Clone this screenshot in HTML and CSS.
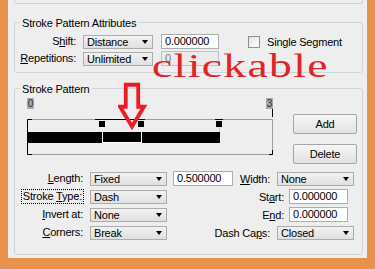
FILE: index.html
```html
<!DOCTYPE html>
<html>
<head>
<meta charset="utf-8">
<link rel="stylesheet" href="styles.css">
</head>
<body>
<div class="panel">
  <div class="prev-box"></div>

  <fieldset class="group g1">
    <legend>Stroke Pattern Attributes</legend>
    <div class="attr-grid">
      <span class="lbl">S<u>h</u>ift:</span>
      <div class="combo w70"><span>Distance</span><i class="caret"></i></div>
      <div class="field w58">0.000000</div>
      <div class="check-wrap"><span class="check"></span><span>Single Se<u>g</u>ment</span></div>

      <span class="lbl"><u>R</u>epetitions:</span>
      <div class="combo w70"><span>Unlimited</span><i class="caret"></i></div>
      <div class="field w58 disabled">0</div>
    </div>
  </fieldset>

  <fieldset class="group g2">
    <legend>Stroke Pattern</legend>
    <div class="pattern-top">
      <div class="pattern">
        <div class="ruler"><span class="tick">0</span><span class="tick">3</span></div>
        <svg class="pat-svg" width="247" height="48" viewBox="0 0 247 48">
          <path d="M5 10.5H245.5V45.5H5" fill="none" stroke="#9e9e9e"/>
          <path d="M5 10.5H0.5V45.5H5" fill="none" stroke="#000"/>
          <path d="M245.5 0V8" fill="none" stroke="#000"/>
          <path d="M242 45.5H245.5V41" fill="none" stroke="#000"/>
          <path d="M68 10.5H118" fill="none" stroke="#000"/>
          <path d="M188 10.5H196" fill="none" stroke="#000"/>
          <rect x="0" y="23" width="75" height="11" fill="#000"/>
          <rect x="76" y="23" width="38" height="10" fill="#000"/>
          <path d="M75.5 18V33.5H114.5V18" fill="none" stroke="#fff"/>
          <rect x="115" y="23" width="78" height="11" fill="#000"/>
          <rect x="72" y="12" width="6" height="6" fill="#000"/>
          <rect x="111" y="12" width="6" height="6" fill="#000"/>
          <rect x="189" y="12" width="6" height="6" fill="#000"/>
          <path d="M192.5 18V23" fill="none" stroke="#c8c8c8"/>
        </svg>
      </div>
      <div class="buttons">
        <button class="btn">Add</button>
        <button class="btn">Delete</button>
      </div>
    </div>

    <div class="form-grid">
      <span class="lbl"><u>L</u>ength:</span>
      <div class="combo w77"><span>Fixed</span><i class="caret"></i></div>
      <div class="right split">
        <div class="field w60">0.500000</div>
        <div class="pair"><span><u>W</u>idth:</span><div class="combo w77"><span>None</span><i class="caret"></i></div></div>
      </div>

      <span class="lbl"><span class="focus">Stroke <u>T</u>ype:</span></span>
      <div class="combo w77"><span>Dash</span><i class="caret"></i></div>
      <div class="right end inset">
        <div class="pair tight"><span>St<u>a</u>rt:</span><div class="field w59">0.000000</div></div>
      </div>

      <span class="lbl"><u>I</u>nvert at:</span>
      <div class="combo w77"><span>None</span><i class="caret"></i></div>
      <div class="right end inset">
        <div class="pair tight"><span>E<u>n</u>d:</span><div class="field w59">0.000000</div></div>
      </div>

      <span class="lbl"><u>C</u>orners:</span>
      <div class="combo w77"><span>Break</span><i class="caret"></i></div>
      <div class="right end">
        <div class="pair"><span>Dash Ca<u>p</u>s:</span><div class="combo w77"><span>Closed</span><i class="caret"></i></div></div>
      </div>
    </div>
  </fieldset>

  <svg class="arrow" width="30" height="50" viewBox="0 0 30 50">
    <path d="M7.75 2.75H20.25V24.75H26L14 44.5L2 24.75H7.75Z" fill="none" stroke="#ec1c24" stroke-width="3.8" stroke-linejoin="miter"/>
  </svg>
  <div class="note">clickable</div>
</div>
</body>
</html>
```

FILE: styles.css
```css
html, body {
  margin: 0;
  padding: 0;
}

body {
  width: 375px;
  height: 269px;
  overflow: hidden;
  background: #e8914b;
  font-family: "Liberation Sans", Arial, sans-serif;
  font-size: 11px;
  letter-spacing: -0.2px;
  color: #000;
}

.panel {
  position: relative;
  margin-left: 8px;
  width: 359px;
  height: 258px;
  background: #eeeeee;
  overflow: hidden;
}

.prev-box {
  margin-left: 6px;
  width: 349px;
  height: 4px;
  box-sizing: border-box;
  border: 1px solid #d0d4d7;
  border-top: 0;
  border-radius: 0 0 3px 3px;
}

.group {
  margin: 0 0 0 6px;
  width: 349px;
  box-sizing: border-box;
  border: 1px solid #d0d4d7;
  border-radius: 3px;
  padding: 0;
  min-inline-size: 0;
}

.group legend {
  margin-left: 5px;
  padding: 2px 2px 0;
  line-height: 13px;
}

.g1 {
  margin-top: 11px;
  padding: 4px 0 6px;
}

.g2 {
  margin-top: 8px;
  padding: 2px 0 14px;
}

u {
  text-decoration: underline;
  text-underline-offset: 1px;
}

.lbl {
  text-align: right;
  padding-right: 7px;
  line-height: 15px;
  white-space: nowrap;
}

.attr-grid {
  display: grid;
  grid-template-columns: 68px 78px 87px auto;
  grid-auto-rows: 15px;
  row-gap: 2px;
  align-items: center;
}

.form-grid {
  margin-top: 7px;
  display: grid;
  grid-template-columns: 75px 83px 181px;
  grid-auto-rows: 15px;
  row-gap: 3px;
  align-items: center;
}

.combo {
  display: flex;
  align-items: center;
  justify-content: space-between;
  height: 14px;
  box-sizing: border-box;
  border: 1px solid #acacac;
  background: linear-gradient(#f2f2f2, #e0e0e0);
  padding: 0 4px 0 3px;
  line-height: 12px;
  white-space: nowrap;
}

.caret {
  width: 0;
  height: 0;
  border-left: 3.5px solid transparent;
  border-right: 3.5px solid transparent;
  border-top: 4px solid #000;
}

.w70 { width: 70px; }
.w77 { width: 77px; }
.w58 { width: 58px; }
.w59 { width: 59px; }
.w60 { width: 60px; }

.field {
  height: 15px;
  box-sizing: border-box;
  border: 1px solid #abadb3;
  background: #fff;
  padding: 0 3px;
  line-height: 13px;
  white-space: nowrap;
}

.field.disabled {
  background: #ebebeb;
  border-color: #b9c2d2;
  color: #7a7a7a;
}

.check-wrap {
  display: flex;
  align-items: center;
  gap: 7px;
  white-space: nowrap;
}

.check {
  width: 12px;
  height: 12px;
  box-sizing: border-box;
  border: 1px solid #8e8f8f;
  background: linear-gradient(135deg, #e2e2e2, #ffffff);
}

.pattern-top {
  display: flex;
  align-items: flex-start;
}

.pattern {
  margin-left: 12px;
  width: 247px;
}

.ruler {
  width: 246px;
  height: 11px;
  display: flex;
  justify-content: space-between;
}

.tick {
  width: 7px;
  height: 11px;
  background: #a9a9a9;
  color: #303030;
  font-size: 10px;
  line-height: 11px;
  text-align: center;
  letter-spacing: 0;
}

.pat-svg {
  display: block;
}

.buttons {
  display: flex;
  flex-direction: column;
  gap: 10px;
  margin-left: 19px;
  margin-top: 16px;
}

.btn {
  display: block;
  width: 64px;
  height: 20px;
  box-sizing: border-box;
  border: 1px solid #a5a5a5;
  border-radius: 2px;
  background: linear-gradient(#f6f6f6, #e2e2e2);
  font: inherit;
  letter-spacing: inherit;
  color: #000;
  padding: 0;
}

.right {
  display: flex;
  align-items: center;
  height: 15px;
}

.right.split {
  justify-content: space-between;
}

.right.end {
  justify-content: flex-end;
}

.right.inset {
  padding-right: 6px;
}

.pair {
  display: flex;
  align-items: center;
  gap: 7px;
  white-space: nowrap;
}

.pair.tight {
  gap: 5px;
}

.focus {
  display: inline-block;
  outline: 1px dotted #000;
  padding: 0 1px;
  line-height: 13px;
}

.arrow {
  position: absolute;
  left: 110px;
  top: 82px;
}

.note {
  position: absolute;
  left: 144px;
  top: 50px;
  font-family: "Liberation Serif", "Times New Roman", serif;
  font-size: 33px;
  line-height: 33px;
  letter-spacing: 1px;
  color: #e02427;
  white-space: nowrap;
  transform: scaleX(1.38);
  transform-origin: 0 0;
}
```
